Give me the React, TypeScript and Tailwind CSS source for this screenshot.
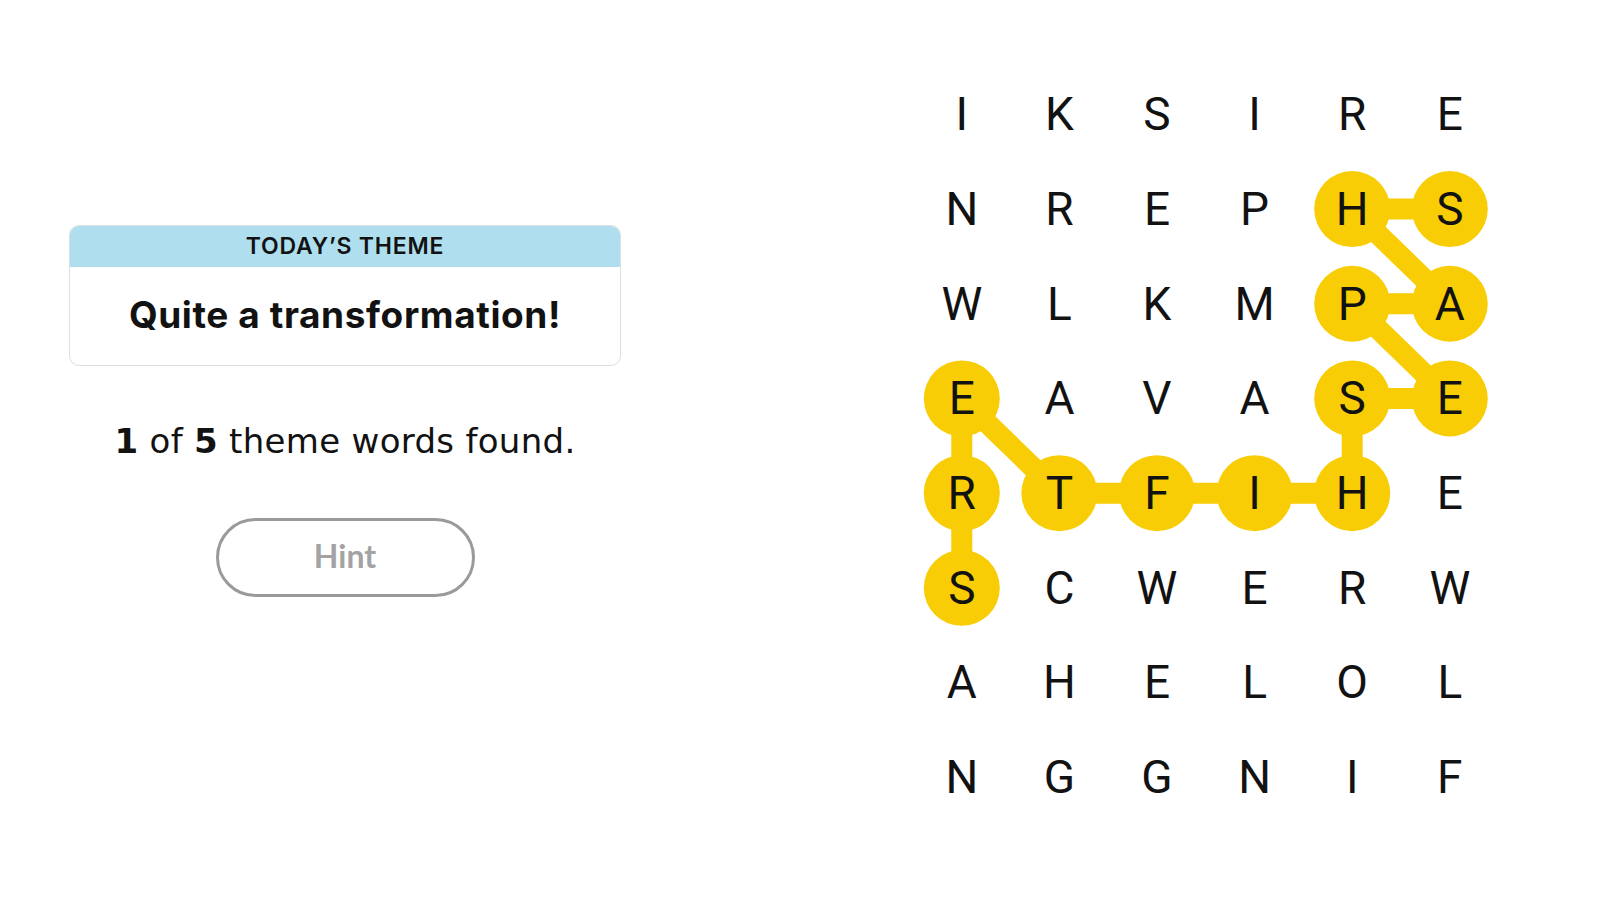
const GRID = [
  "IKSIRE",
  "NREPHS",
  "WLKMPA",
  "EAVASE",
  "RTFIHE",
  "SCWERW",
  "AHELOL",
  "NGGNIF",
];

const COL_W = 97.6;
const ROW_H = 94.7;

// SHAPESHIFTERS, [row, col]
const PATH: [number, number][] = [
  [1, 5],
  [1, 4],
  [2, 5],
  [2, 4],
  [3, 5],
  [3, 4],
  [4, 4],
  [4, 3],
  [4, 2],
  [4, 1],
  [3, 0],
  [4, 0],
  [5, 0],
];

const cx = (c: number) => COL_W / 2 + c * COL_W;
const cy = (r: number) => ROW_H / 2 + r * ROW_H;

function Highlight() {
  const pts = PATH.map(([r, c]) => `${cx(c)},${cy(r)}`).join(" ");
  return (
    <svg
      className="absolute inset-0"
      width={COL_W * 6}
      height={ROW_H * 8}
      viewBox={`0 0 ${COL_W * 6} ${ROW_H * 8}`}
    >
      <polyline
        points={pts}
        fill="none"
        stroke="#f8cd05"
        strokeWidth={21}
        strokeLinejoin="round"
      />
      {PATH.map(([r, c], i) => (
        <circle key={i} cx={cx(c)} cy={cy(r)} r={38} fill="#f8cd05" />
      ))}
    </svg>
  );
}

function ThemeCard() {
  return (
    <div className="w-[552px] rounded-[10px] border border-[#dedede] overflow-hidden bg-white">
      <div className="h-[41px] bg-[#afdfee] flex items-center justify-center">
        <span
          className="text-[23px] font-semibold tracking-[0.8px] text-[#121212] leading-none"
          style={{ fontFamily: "Inter, sans-serif" }}
        >
          TODAY’S THEME
        </span>
      </div>
      <div className="h-[98px] flex items-center justify-center pb-[4px]">
        <span
          className="text-[37px] font-bold tracking-[0.6px] text-[#121212] leading-none"
          style={{ fontFamily: "Inter, sans-serif" }}
        >
          Quite a transformation!
        </span>
      </div>
    </div>
  );
}

export default function App() {
  return (
    <div className="w-[1600px] h-[900px] bg-white flex items-start pl-[69px]">
      <div className="w-[552px] flex flex-col items-center mt-[225px]">
        <ThemeCard />
        <p
          className="mt-[54px] text-[34px] leading-[42px] tracking-[0.3px] text-[#121212] whitespace-nowrap"
          style={{ fontFamily: "'DejaVu Sans', sans-serif" }}
        >
          <b className="font-bold">1</b> of <b className="font-bold">5</b> theme words found.
        </p>
        <button
          className="mt-[56px] w-[259px] h-[79px] rounded-full border-[3px] border-[#9a9a9a] flex items-center justify-center pb-[3px] text-[32px] font-bold text-[#a3a3a3] bg-white"
          style={{ fontFamily: "Lato, sans-serif" }}
        >
          Hint
        </button>
      </div>

      <div className="relative ml-[292px] mt-[67px] w-[585.6px] h-[758px]">
        <Highlight />
        <div className="relative grid grid-cols-6">
          {GRID.flatMap((row, r) =>
            row.split("").map((ch, c) => (
              <div
                key={`${r}-${c}`}
                className="h-[94.7px] flex items-center justify-center text-[46px] leading-none text-[#121212]"
                style={{ fontFamily: "Roboto, sans-serif" }}
              >
                {ch}
              </div>
            ))
          )}
        </div>
      </div>
    </div>
  );
}
